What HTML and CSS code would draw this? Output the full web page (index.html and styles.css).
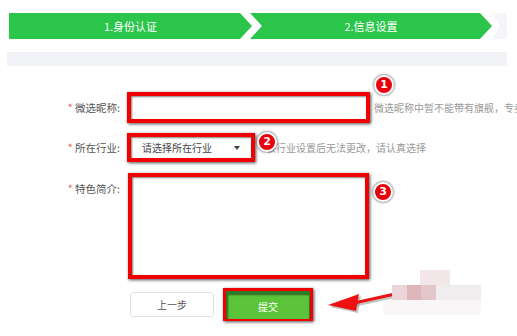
FILE: index.html
```html
<!DOCTYPE html>
<html lang="zh-CN">
<head>
    <meta charset="UTF-8">
    <title>信息设置</title>
    <link rel="stylesheet" href="styles.css">
</head>
<body>
    <div class="page">
        <div class="steps">
            <div class="step step-first">1.身份认证</div>
            <div class="step step-mid">2.信息设置</div>
            <div class="step step-last"></div>
        </div>
        <div class="band"></div>

        <div class="form">
            <div class="row row-name">
                <label class="label"><span class="req">*</span> 微选昵称:</label>
                <div class="field box-name">
                    <span class="mark mark-1">1</span>
                </div>
                <span class="hint">微选昵称中暂不能带有旗舰，专卖等字样</span>
            </div>

            <div class="row row-trade">
                <label class="label"><span class="req">*</span> 所在行业:</label>
                <div class="field box-trade">
                    <span class="select-text">请选择所在行业</span>
                    <span class="caret"></span>
                    <span class="mark mark-2">2</span>
                </div>
                <span class="hint hint-trade">该行业设置后无法更改，请认真选择</span>
            </div>

            <div class="row row-intro">
                <label class="label label-top"><span class="req">*</span> 特色简介:</label>
                <div class="field box-intro">
                    <span class="mark mark-3">3</span>
                </div>
            </div>

            <div class="actions">
                <button class="btn btn-prev">上一步</button>
                <div class="submit-box">
                    <button class="btn btn-submit">提交</button>
                </div>
            </div>
        </div>

        <svg class="arrow" width="80" height="30" viewBox="0 0 80 30">
            <line x1="77" y1="6" x2="28" y2="17" stroke="#888" stroke-width="3" opacity="0.5"/>
            <polygon points="2,19 33,8 30,25" fill="#888" opacity="0.5"/>
            <line x1="76" y1="4" x2="26" y2="15" stroke="#ee1111" stroke-width="3"/>
            <polygon points="0,17 31,6 28,23" fill="#ee1111"/>
        </svg>

        <div class="mosaic">
            <span class="px" style="left:28px;top:0;width:30px;background:#f2e6e8"></span>
            <span class="px" style="left:0;top:15px;width:15px;background:#ecd5d8"></span>
            <span class="px" style="left:15px;top:15px;width:14px;background:#ddb6b9"></span>
            <span class="px" style="left:29px;top:15px;width:15px;background:#e3c6c9"></span>
            <span class="px" style="left:44px;top:15px;width:45px;background:#efeded"></span>
            <span class="px" style="left:-9px;top:30px;width:98px;background:#f8f6f6"></span>
        </div>
    </div>
</body>
</html>
```

FILE: styles.css
```css
body {
    margin: 0;
    background-color: white;
    font-family: "Noto Sans CJK SC", "Liberation Sans", sans-serif;
    overflow: hidden;
}
.page {
    position: relative;
    width: 517px;
    height: 336px;
    padding-top: 13px;
    box-sizing: border-box;
}
.steps {
    display: flex;
    height: 26px;
    margin-left: 9px;
}
.step {
    display: flex;
    align-items: center;
    justify-content: center;
    color: white;
    font-size: 11px;
    background-color: #2bc54b;
}
.step-first {
    width: 243px;
    clip-path: polygon(0 0, 231px 0, 100% 50%, 231px 100%, 0 100%);
}
.step-mid {
    width: 242px;
    margin-left: -2px;
    clip-path: polygon(0 0, 230px 0, 100% 50%, 230px 100%, 0 100%, 12px 50%);
}
.step-last {
    width: 15px;
    background-color: #f4f5f8;
    clip-path: polygon(0 0, 100% 0, 100% 100%, 0 100%, 8px 50%);
}
.band {
    height: 14px;
    margin: 13px 10px 0 7px;
    background-color: #f2f3f6;
}
.form {
    padding-top: 26px;
}
.row {
    display: flex;
    align-items: center;
    white-space: nowrap;
}
.row-trade {
    margin-top: 10px;
}
.row-intro {
    margin-top: 11px;
    align-items: flex-start;
}
.label {
    width: 120px;
    text-align: right;
    font-size: 10.5px;
    color: #555;
    flex-shrink: 0;
}
.label-top {
    padding-top: 8px;
}
.req {
    color: #f05a5a;
}
.field {
    position: relative;
    box-sizing: border-box;
    border: 4px solid #f00000;
    box-shadow: 1px 1px 3px rgba(0, 0, 0, 0.7), inset 1px 1px 2px rgba(0, 0, 0, 0.5);
    background-color: white;
    flex-shrink: 0;
}
.box-name {
    width: 243px;
    height: 31px;
    margin-left: 7px;
}
.box-trade {
    width: 128px;
    height: 29px;
    margin-left: 7px;
    display: flex;
    align-items: center;
    padding: 0 11px;
    font-size: 10px;
    color: #444;
}
.select-text {
    flex: 1;
}
.caret {
    width: 0;
    height: 0;
    border-left: 3px solid transparent;
    border-right: 3px solid transparent;
    border-top: 4px solid #444;
}
.box-intro {
    width: 241px;
    height: 106px;
    margin-left: 8px;
}
.hint {
    font-size: 10px;
    color: #999;
    margin-left: 4px;
}
.hint-trade {
    margin-left: 11px;
}
.mark {
    position: absolute;
    width: 16px;
    height: 16px;
    border-radius: 50%;
    background-color: #e8000b;
    border: 2px solid white;
    box-shadow: 0 0 2px 1px rgba(0, 0, 0, 0.35);
    color: white;
    font-family: "DejaVu Sans", sans-serif;
    font-weight: bold;
    font-size: 11px;
    line-height: 16px;
    text-align: center;
    z-index: 2;
}
.mark-1 {
    left: 243px;
    top: -21px;
}
.mark-2 {
    left: 126px;
    top: -5px;
}
.mark-3 {
    left: 241px;
    top: 5px;
}
.actions {
    display: flex;
    align-items: center;
    margin-top: 9px;
    margin-left: 130px;
}
.btn {
    font-family: "Noto Sans CJK SC", "Liberation Sans", sans-serif;
    font-size: 10px;
    cursor: pointer;
    box-sizing: border-box;
}
.btn-prev {
    width: 84px;
    height: 25px;
    background-color: white;
    color: #555;
    border: 1px solid #e2e2e2;
    border-radius: 3px;
}
.submit-box {
    margin-left: 9px;
    width: 90px;
    height: 33px;
    box-sizing: border-box;
    border: 3px solid #f00000;
    box-shadow: 1px 1px 3px rgba(0, 0, 0, 0.7);
    padding: 1px;
    background-color: #2f7a2a;
}
.btn-submit {
    width: 100%;
    height: 100%;
    border: none;
    background-color: #5cc43a;
    color: white;
    box-shadow: inset 1px 1px 2px rgba(0, 0, 0, 0.5);
}
.arrow {
    position: absolute;
    left: 328px;
    top: 288px;
}
.mosaic {
    position: absolute;
    left: 392px;
    top: 270px;
    width: 90px;
    height: 45px;
}
.px {
    position: absolute;
    height: 15px;
}
```
